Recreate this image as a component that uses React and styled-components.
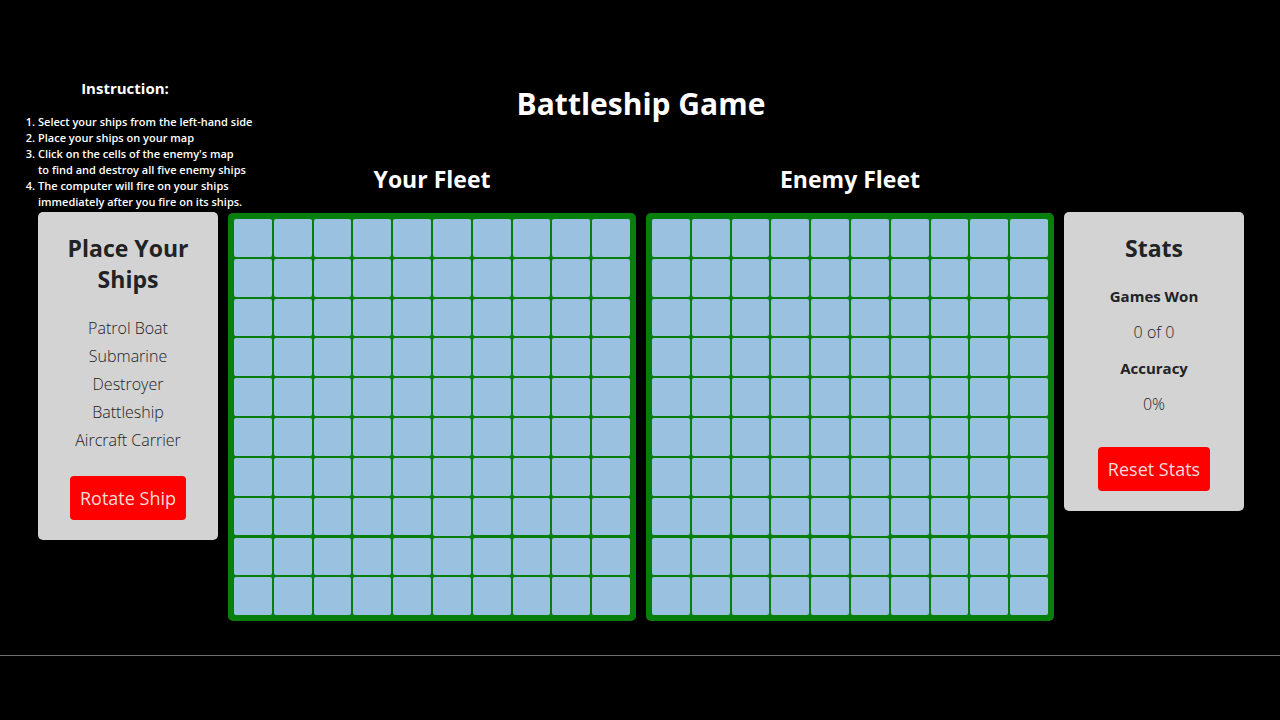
import React, { useState } from 'react';
import styled, { createGlobalStyle } from 'styled-components';

const SIZE = 10;
const SHIPS = ['Patrol Boat', 'Submarine', 'Destroyer', 'Battleship', 'Aircraft Carrier'];

const GlobalStyle = createGlobalStyle`
  * {
    box-sizing: border-box;
  }

  body {
    margin: 0;
    color: #fff;
    font-family: 'Open Sans', 'Noto Sans', sans-serif;
    background-color: #000;
  }

  h1, h2, h3, h4, p, ol, ul {
    margin: 0;
    padding: 0;
  }
`;

const Page = styled.main`
  display: grid;
  grid-template-columns: 180px minmax(0, 1fr) minmax(0, 1fr) 180px;
  grid-template-rows: auto 1fr auto;
  grid-template-areas:
    'help title title .'
    'help fleet enemy .'
    'ships board target stats';
  column-gap: 10px;
  padding: 76px 36px 34px 38px;
`;

const Instructions = styled.section`
  grid-area: help;
  padding-bottom: 2px;
  white-space: nowrap;
`;

const InstructionTitle = styled.h4`
  margin-bottom: 14px;
  padding-right: 6px;
  font-size: 15px;
  line-height: 24px;
  text-align: center;
`;

const Steps = styled.ol`
  font-size: 11px;
  font-weight: 600;
  line-height: 16px;
`;

const Title = styled.h1`
  grid-area: title;
  padding-top: 6px;
  font-size: 30px;
  line-height: 44px;
  text-align: center;
`;

const FleetTitle = styled.h2`
  grid-area: ${ props => props.$area };
  align-self: end;
  padding-bottom: 17px;
  font-size: 23px;
  line-height: 32px;
  text-align: center;
`;

const BoardGrid = styled.div`
  display: grid;
  grid-area: ${ props => props.$area };
  grid-template-columns: repeat(${ SIZE }, minmax(0, 1fr));
  gap: 2px;
  align-self: start;
  margin-top: 1px;
  padding: 6px;
  background-color: #087f0c;
  border-radius: 5px;
`;

const Cell = styled.button`
  aspect-ratio: 1;
  padding: 0;
  background-color: #9ac1df;
  border: 0;
  border-radius: 2px;
  cursor: pointer;
`;

const Panel = styled.aside`
  grid-area: ${ props => props.$area };
  align-self: start;
  padding: 21px 20px 20px;
  color: #212225;
  text-align: center;
  background-color: #d3d3d3;
  border-radius: 5px;
`;

const PanelTitle = styled.h3`
  font-size: 23px;
  font-weight: 700;
  line-height: 31px;
`;

const ShipList = styled.ul`
  margin: 19px 0 22px;
  list-style: none;
`;

const Ship = styled.button`
  width: 100%;
  padding: 0;
  color: #212225;
  font-family: inherit;
  font-size: 16px;
  font-weight: ${ props => props.$selected ? 600 : 300 };
  line-height: 28px;
  white-space: nowrap;
  background: none;
  border: 0;
  cursor: pointer;
`;

const StatList = styled.div`
  margin: 14px 0 25px;
  line-height: 36px;
`;

const StatName = styled.h4`
  font-size: 15px;
  font-weight: 700;
`;

const StatValue = styled.p`
  font-size: 16px;
  font-weight: 300;
`;

const Button = styled.button`
  height: 44px;
  padding: 0 10px;
  color: #f5dada;
  font-family: inherit;
  font-size: 18px;
  font-weight: 500;
  white-space: nowrap;
  background-color: #f00;
  border: 0;
  border-radius: 4px;
  cursor: pointer;
`;

const Footer = styled.footer`
  border-top: 1px solid #707070;
`;

const Board = ({ name, area }) => (
  <BoardGrid $area={ area } role="group" aria-label={ name }>
    {Array.from({ length: SIZE * SIZE }, (_, i) => (
      <Cell
        key={ i }
        type="button"
        aria-label={ `Row ${ Math.floor(i / SIZE) + 1 }, column ${ i % SIZE + 1 }` }
      />
    ))}
  </BoardGrid>
);

const App = () => {
  const [selected, setSelected] = useState(null);

  return (
    <>
      <GlobalStyle />
      <Page>
        <Instructions>
          <InstructionTitle>Instruction:</InstructionTitle>
          <Steps>
            <li>Select your ships from the left-hand side</li>
            <li>Place your ships on your map</li>
            <li>Click on the cells of the enemy's map<br />to find and destroy all five enemy ships</li>
            <li>The computer will fire on your ships<br />immediately after you fire on its ships.</li>
          </Steps>
        </Instructions>
        <Title>Battleship Game</Title>
        <FleetTitle $area="fleet">Your Fleet</FleetTitle>
        <FleetTitle $area="enemy">Enemy Fleet</FleetTitle>

        <Panel $area="ships">
          <PanelTitle>Place Your Ships</PanelTitle>
          <ShipList>
            {SHIPS.map(ship => (
              <li key={ ship }>
                <Ship type="button" $selected={ ship === selected } onClick={ () => setSelected(ship) }>
                  {ship}
                </Ship>
              </li>
            ))}
          </ShipList>
          <Button type="button">Rotate Ship</Button>
        </Panel>
        <Board name="Your Fleet" area="board" />
        <Board name="Enemy Fleet" area="target" />
        <Panel $area="stats">
          <PanelTitle>Stats</PanelTitle>
          <StatList>
            <StatName>Games Won</StatName>
            <StatValue>0 of 0</StatValue>
            <StatName>Accuracy</StatName>
            <StatValue>0%</StatValue>
          </StatList>
          <Button type="button">Reset Stats</Button>
        </Panel>
      </Page>
      <Footer />
    </>
  );
};

export default App;
